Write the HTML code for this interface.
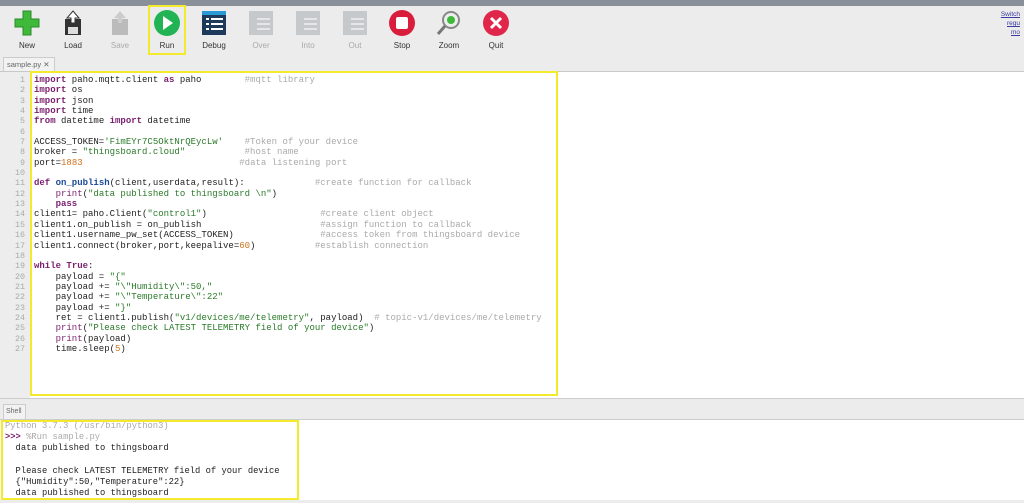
<!DOCTYPE html>
<html><head><meta charset="utf-8"><style>
*{margin:0;padding:0;box-sizing:border-box}
body{width:1024px;height:503px;overflow:hidden;background:#ececec;font-family:"Liberation Sans",sans-serif;position:relative}
.top{position:absolute;left:0;top:0;width:1024px;height:6px;background:#8a9099}
.btn{position:absolute;top:9px;width:46px;text-align:center;font-size:8px;color:#333}
.btn svg{display:block;width:28px;height:28px;margin:0 auto 4px}
.btn.dis{color:#aaa}
.code{position:absolute;font-family:"Liberation Mono",monospace;font-size:9px;line-height:10.35px;white-space:pre;color:#222}
.k{color:#7a1f6e;font-weight:bold}.s{color:#2a7a2a}.c{color:#aaa}.n{color:#d0701a}.f{color:#1a4a9a;font-weight:bold}.b{color:#7a1f6e}
.yb{position:absolute;border:2.5px solid #f4ea2c}
</style></head><body>
<div class="top"></div>

<div class="btn" style="left:4px"><svg viewBox="0 0 28 28"><path d="M10 2h8v8h8v8h-8v8h-8v-8H2v-8h8z" fill="#3fb93a" stroke="#2a8a2a"/></svg>New</div>
<div class="btn" style="left:50px"><svg viewBox="0 0 28 28"><rect x="6" y="10" width="16" height="16" fill="#333"/><rect x="9" y="18" width="10" height="7" fill="#ddd"/><path d="M14 2l6 7h-4v5h-4v-5h-4z" fill="#fff" stroke="#333"/></svg>Load</div>
<div class="btn dis" style="left:97px"><svg viewBox="0 0 28 28"><rect x="6" y="10" width="16" height="16" fill="#bbb"/><path d="M14 2l6 7h-4v5h-4v-5h-4z" fill="#ccc"/></svg>Save</div>
<div class="btn" style="left:144px"><svg viewBox="0 0 28 28"><circle cx="14" cy="14" r="13" fill="#22b355"/><path d="M10 7l10 7-10 7z" fill="#fff"/></svg>Run</div>
<div class="btn" style="left:191px"><svg viewBox="0 0 28 28"><rect x="2" y="2" width="24" height="24" fill="#1e3a5a"/><rect x="2" y="2" width="24" height="4" fill="#2a9ad6"/><path d="M6 10h3M11 10h12M6 15h3M11 15h12M6 20h3M11 20h12" stroke="#fff" stroke-width="2"/></svg>Debug</div>
<div class="btn dis" style="left:238px"><svg viewBox="0 0 28 28"><rect x="2" y="2" width="24" height="24" fill="#c5c9cc"/><path d="M10 10h13M10 15h13M10 20h13" stroke="#e6e6e6" stroke-width="2"/></svg>Over</div>
<div class="btn dis" style="left:285px"><svg viewBox="0 0 28 28"><rect x="2" y="2" width="24" height="24" fill="#c5c9cc"/><path d="M10 10h13M10 15h13M10 20h13" stroke="#e6e6e6" stroke-width="2"/></svg>Into</div>
<div class="btn dis" style="left:332px"><svg viewBox="0 0 28 28"><rect x="2" y="2" width="24" height="24" fill="#c5c9cc"/><path d="M10 10h13M10 15h13M10 20h13" stroke="#e6e6e6" stroke-width="2"/></svg>Out</div>
<div class="btn" style="left:379px"><svg viewBox="0 0 28 28"><circle cx="14" cy="14" r="13" fill="#d81e3c"/><rect x="8" y="8" width="12" height="12" rx="2" fill="#fff"/></svg>Stop</div>
<div class="btn" style="left:426px"><svg viewBox="0 0 28 28"><circle cx="16" cy="11" r="8" fill="#eee" stroke="#888" stroke-width="2"/><circle cx="16" cy="11" r="4" fill="#3fb93a"/><path d="M10 17l-7 8" stroke="#777" stroke-width="3"/></svg>Zoom</div>
<div class="btn" style="left:473px"><svg viewBox="0 0 28 28"><circle cx="14" cy="14" r="13" fill="#e0264a"/><path d="M9 9l10 10M19 9l-10 10" stroke="#fff" stroke-width="3"/></svg>Quit</div>

<div style="position:absolute;right:4px;top:10px;font-size:6.5px;line-height:9px;color:#3a3aa0;text-align:right;text-decoration:underline">Switch<br>regu<br>mo</div>

<div class="yb" style="left:148px;top:5px;width:38px;height:50px"></div>

<div style="position:absolute;left:0;top:71px;width:1024px;height:1px;background:#c8c8c8"></div>
<div style="position:absolute;left:3px;top:57px;width:52px;height:14px;background:#f2f2f2;border:1px solid #ccc;border-bottom:none;font-size:7.5px;color:#666;padding:2px 3px">sample.py ✕</div>

<div style="position:absolute;left:0;top:72px;width:1024px;height:326px;background:#fff"></div>
<div style="position:absolute;left:0;top:72px;width:30px;height:326px;background:#ededed"></div>
<div class="code" style="left:2px;top:75px;width:23px;text-align:right;color:#aaa;font-size:8.4px">1
2
3
4
5
6
7
8
9
10
11
12
13
14
15
16
17
18
19
20
21
22
23
24
25
26
27</div>
<div class="code" style="left:34px;top:75px"><span class="k">import</span> paho.mqtt.client <span class="k">as</span> paho        <span class="c">#mqtt library</span>
<span class="k">import</span> os
<span class="k">import</span> json
<span class="k">import</span> time
<span class="k">from</span> datetime <span class="k">import</span> datetime

ACCESS_TOKEN=<span class="s">'FimEYr7C5OktNrQEycLw'</span>    <span class="c">#Token of your device</span>
broker = <span class="s">"thingsboard.cloud"</span>           <span class="c">#host name</span>
port=<span class="n">1883</span>                             <span class="c">#data listening port</span>

<span class="k">def</span> <span class="f">on_publish</span>(client,userdata,result):             <span class="c">#create function for callback</span>
    <span class="b">print</span>(<span class="s">"data published to thingsboard \n"</span>)
    <span class="k">pass</span>
client1= paho.Client(<span class="s">"control1"</span>)                     <span class="c">#create client object</span>
client1.on_publish = on_publish                      <span class="c">#assign function to callback</span>
client1.username_pw_set(ACCESS_TOKEN)                <span class="c">#access token from thingsboard device</span>
client1.connect(broker,port,keepalive=<span class="n">60</span>)           <span class="c">#establish connection</span>

<span class="k">while</span> <span class="k">True</span>:
    payload = <span class="s">"{"</span>
    payload += <span class="s">"\"Humidity\":50,"</span>
    payload += <span class="s">"\"Temperature\":22"</span>
    payload += <span class="s">"}"</span>
    ret = client1.publish(<span class="s">"v1/devices/me/telemetry"</span>, payload)  <span class="c"># topic-v1/devices/me/telemetry</span>
    <span class="b">print</span>(<span class="s">"Please check LATEST TELEMETRY field of your device"</span>)
    <span class="b">print</span>(payload)
    time.sleep(<span class="n">5</span>)</div>
<div class="yb" style="left:30px;top:71px;width:528px;height:325px"></div>

<div style="position:absolute;left:0;top:398px;width:1024px;height:22px;background:#ececec;border-top:1px solid #ccc"></div>
<div style="position:absolute;left:3px;top:404px;width:23px;height:15px;background:#f2f2f2;border:1px solid #ccc;border-bottom:none;font-size:7px;color:#666;padding:3px 2px">Shell</div>
<div style="position:absolute;left:0;top:419px;width:1024px;height:84px;background:#fff;border-top:1px solid #ccc"></div>
<div class="code" style="left:5px;top:421px;line-height:11.2px;font-size:8.8px"><span class="c">Python 3.7.3 (/usr/bin/python3)</span>
<span class="b" style="font-weight:bold">&gt;&gt;&gt;</span> <span class="c">%Run sample.py</span>
  data published to thingsboard

  Please check LATEST TELEMETRY field of your device
  {"Humidity":50,"Temperature":22}
  data published to thingsboard</div>
<div class="yb" style="left:1px;top:420px;width:298px;height:80px"></div>
<div style="position:absolute;left:0;top:500px;width:1024px;height:3px;background:#ececec"></div>
</body></html>
